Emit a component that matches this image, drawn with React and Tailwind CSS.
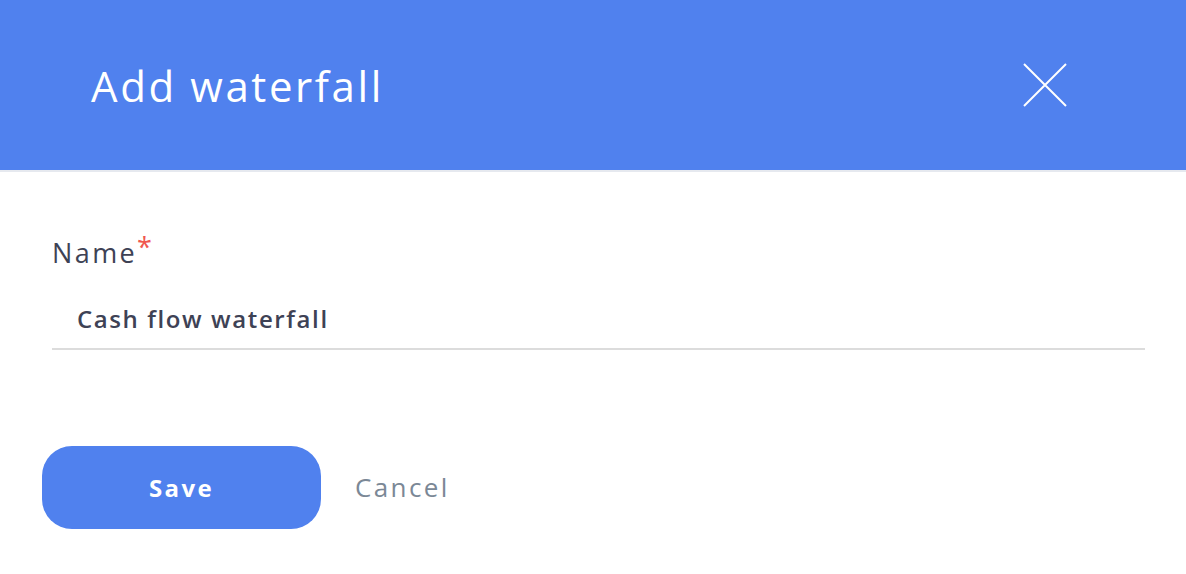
export default function App() {
  return (
    <div className="w-[1186px] h-[574px] bg-white font-['Open_Sans',sans-serif]">
      <div className="h-[172px] bg-[#5081ee] flex items-center justify-between pl-[91px] pr-[119px] border-b-2 border-[#e6e9ef]">
        <h1 className="text-[42px] text-white tracking-[2.6px]">Add waterfall</h1>
        <svg width="44" height="44" viewBox="0 0 44 44" className="text-white">
          <path d="M1 1 L43 43 M43 1 L1 43" stroke="currentColor" strokeWidth="2" fill="none" />
        </svg>
      </div>
      <div className="px-[52px] pt-[67px]">
        <label className="block text-[27px] text-[#3e4255] leading-none tracking-[2.4px]">
          Name<span className="text-[#f0584f] relative -top-[6px] tracking-normal">*</span>
        </label>
        <div className="mt-[35px] pl-[25px] pr-[40px] pb-[11px] border-b-2 border-[#dcdcdc] w-[1093px]">
          <span className="text-[24px] font-semibold text-[#3e4255] tracking-[1.6px]">Cash flow waterfall</span>
        </div>
      </div>
      <div className="flex items-center mt-[96px] pl-[42px] gap-[34px]">
        <button className="w-[279px] h-[83px] rounded-[30px] bg-[#5081ee] text-white text-[24px] font-bold tracking-[2.4px]">Save</button>
        <button className="text-[26px] text-[#7b8896] tracking-[2.4px]">Cancel</button>
      </div>
    </div>
  );
}
